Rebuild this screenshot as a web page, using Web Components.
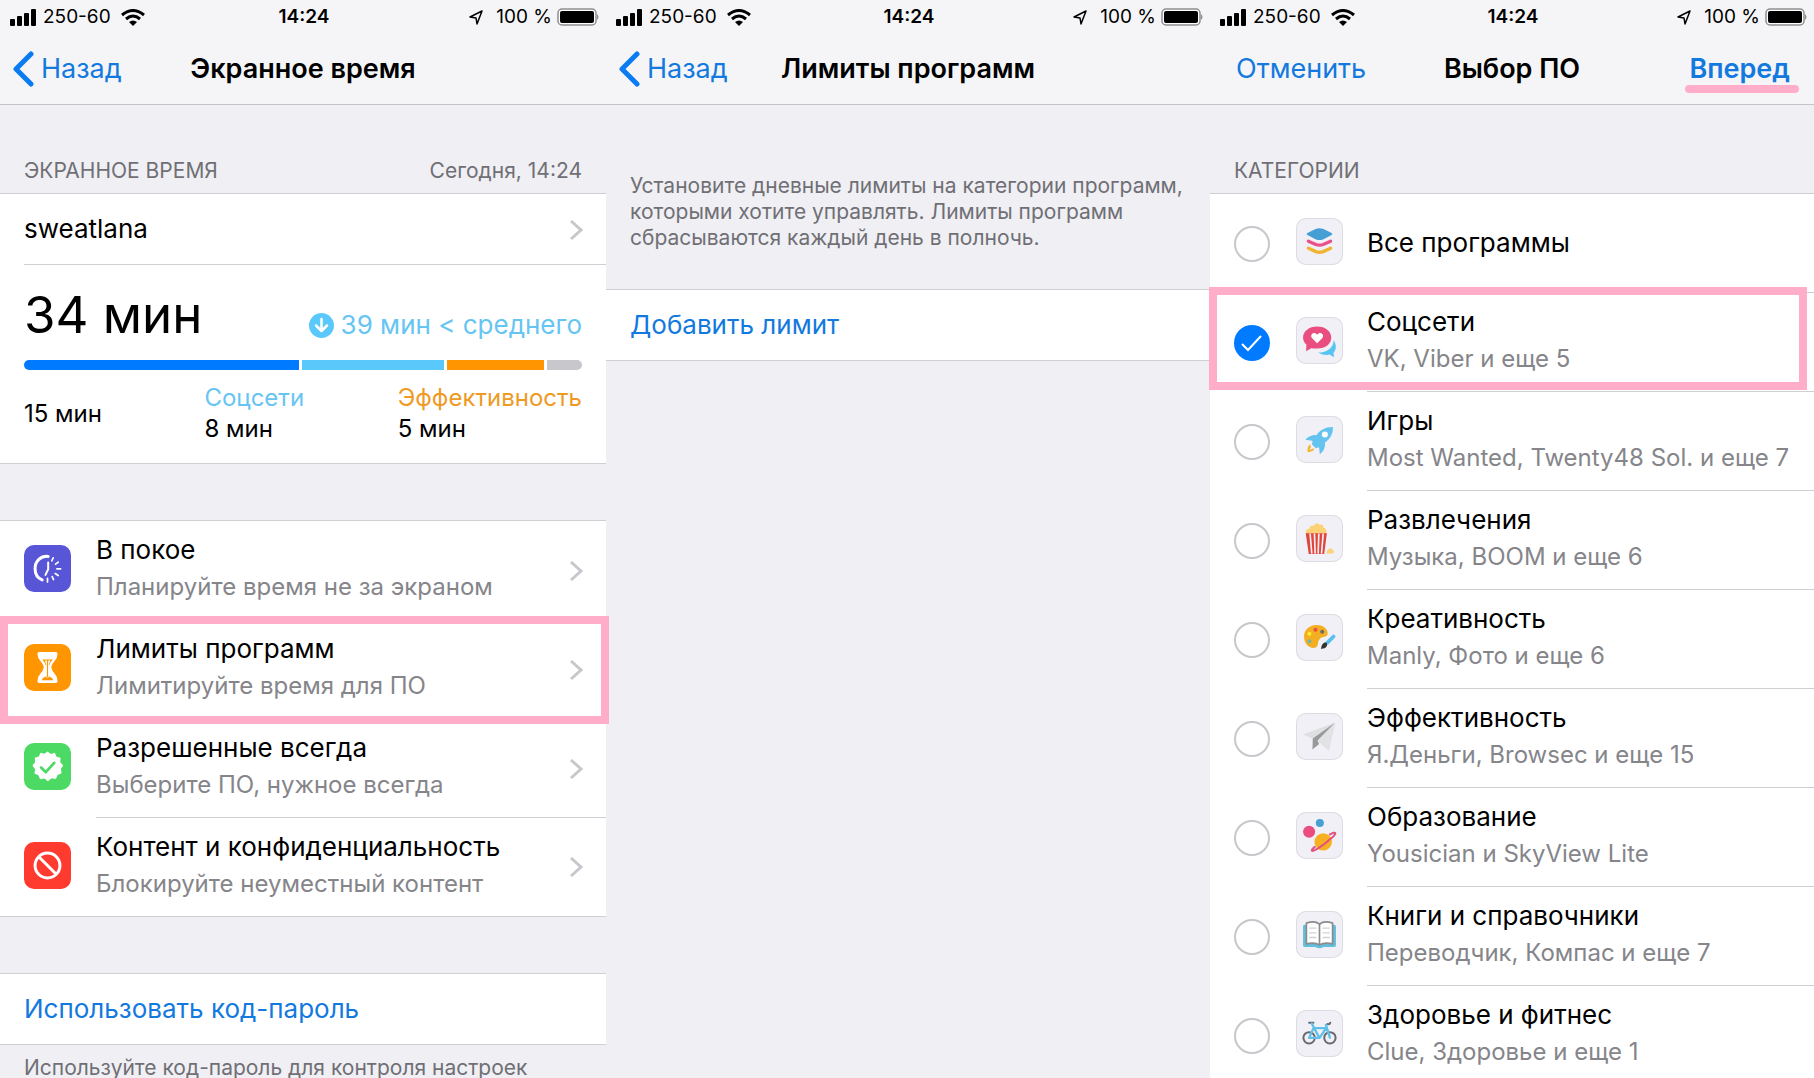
<!DOCTYPE html>
<html lang="ru">
<head>
<meta charset="utf-8">
<meta name="viewport" content="width=device-width, initial-scale=1">
<title>Экранное время</title>
<style>
  :root {
    --bg: #efeff4;
    --bar: #f5f5f7;
    --line: #cfced3;
    --blue: #1279df;
    --grey: #85858a;
    --caption: #6f6f75;
    --mark: #ffadc9;
    --gutter: 24px;
  }
  body {
    margin: 0;
    height: 100vh;
    display: grid;
    grid-template-columns: 303fr 302fr 302fr;
    overflow: hidden;
    background: var(--bg);
    color: #000;
    font-family: Inter, "Liberation Sans", sans-serif;
  }
</style>
</head>
<body>

<phone-screen>
  <nav-bar slot="bar" heading="Экранное время" back="Назад"></nav-bar>
  <section-head>ЭКРАННОЕ ВРЕМЯ<span slot="end">Сегодня, 14:24</span></section-head>
  <list-group>
    <link-row chevron>sweatlana</link-row>
    <usage-summary></usage-summary>
  </list-group>
  <list-group spaced>
    <link-row chevron icon="rest" note="Планируйте время не за экраном">В покое</link-row>
    <link-row chevron marked icon="limits" note="Лимитируйте время для ПО">Лимиты программ</link-row>
    <link-row chevron icon="allowed" note="Выберите ПО, нужное всегда">Разрешенные всегда</link-row>
    <link-row chevron icon="content" note="Блокируйте неуместный контент">Контент и конфиденциальность</link-row>
  </list-group>
  <list-group spaced>
    <link-row action>Использовать код-пароль</link-row>
  </list-group>
  <hint-text>Используйте код-пароль для контроля настроек</hint-text>
</phone-screen>

<phone-screen>
  <nav-bar slot="bar" heading="Лимиты программ" back="Назад"></nav-bar>
  <hint-text intro>Установите дневные лимиты на категории программ, которыми хотите управлять. Лимиты программ сбрасываются каждый день в полночь.</hint-text>
  <list-group>
    <link-row action>Добавить лимит</link-row>
  </list-group>
</phone-screen>

<phone-screen>
  <nav-bar slot="bar" heading="Выбор ПО" cancel="Отменить" next="Вперед"></nav-bar>
  <section-head>КАТЕГОРИИ</section-head>
  <list-group>
    <category-row icon="all">Все программы</category-row>
    <category-row icon="social" checked marked note="VK, Viber и еще 5">Соцсети</category-row>
    <category-row icon="games" note="Most Wanted, Twenty48 Sol. и еще 7">Игры</category-row>
    <category-row icon="fun" note="Музыка, BOOM и еще 6">Развлечения</category-row>
    <category-row icon="creative" note="Manly, Фото и еще 6">Креативность</category-row>
    <category-row icon="work" note="Я.Деньги, Browsec и еще 15">Эффективность</category-row>
    <category-row icon="study" note="Yousician и SkyView Lite">Образование</category-row>
    <category-row icon="books" note="Переводчик, Компас и еще 7">Книги и справочники</category-row>
    <category-row icon="health" note="Clue, Здоровье и еще 1">Здоровье и фитнес</category-row>
  </list-group>
</phone-screen>

<script>
const ICONS = {
  rest: `<g fill="none" stroke="#fff" stroke-linecap="round">
    <path stroke-width="9" d="M72 34C50 32 33 48 33 70c0 16 8 29 21 34"/>
    <path stroke-width="6" d="M72 52v20l-8 17"/>
    <path stroke-width="5" d="M87 38l-4 9M102 51l-8 6M98 71h11M93 85l9 6M84 94l4 9M70 99v11"/></g>`,
  limits: `<path fill="#fff" d="M45 24h50q5 0 5 5 0 12-9 22-8 9-10 18 2 10 10 19 9 10 9 22 0 6-5 6H45q-5 0-5-6 0-12 9-22 8-9 10-19-2-9-10-18-9-10-9-22 0-5 5-5z"/>
    <path fill="#ff9500" d="M54 46h32q-9 9-11 18H65q-2-9-11-18zM52 108q3-8 13-11l3-3V66h4v28l3 3q10 3 13 11z"/>
    <path stroke="#fff" stroke-width="5" d="M65 49l4 13v38M76 49l-5 13v38" fill="none"/><path stroke="#ff9500" stroke-width="3" d="M70 51v47"/>`,
  allowed: `<path fill="#fff" d="M70 25l10 8 12-4 5 12 12 3-1 13 9 10-7 10 2 13-12 5-5 12-13-2-11 9-10-8-13 2-5-12-12-5 2-13-8-11 8-10-1-13 12-4 5-11 12 3z"/>
    <path fill="none" stroke="#4cd964" stroke-width="8" stroke-linecap="round" stroke-linejoin="round" d="M51 73l14 14 25-28"/>`,
  content: `<g fill="none" stroke="#fff" stroke-width="9"><circle cx="70" cy="70" r="37"/><path d="M44 44l52 52"/></g>`,
  all: `<path fill="#459fd5" d="M34 51q-5-3 0-6l24-12q12-5 24 0l24 12q5 3 0 6L82 63q-12 5-24 0z"/>
    <g fill="none" stroke-width="10" stroke-linecap="round"><path stroke="#e9518a" d="M37 69l22 10q11 4 22 0l22-10"/><path stroke="#f0b530" d="M37 90l22 10q11 4 22 0l22-10"/></g>`,
  social: `<path fill="#5ac4f0" d="M112 69c10 14 8 29 0 37l1 14-13-8c-12 3-25 0-34-6 26 0 46-14 46-37z"/>
    <path fill="#ea4e81" d="M63 28c24 0 42 14 42 33S88 94 63 94c-6 0-12 0-16-2L30 102l1-20c-6-5-10-12-10-21 0-19 18-33 42-33z"/>
    <path fill="#fff" d="M63 78L48 63c-9-11 7-23 15-10 8-13 24-1 15 10z"/>`,
  games: `<path fill="#64c4ef" d="M110 33c-20-1-38 8-49 24-12-1-24 3-33 14l20 3c2 3 1 6-1 10l12 12c4-2 8-3 10-1l2 19c12-8 17-21 15-34 15-11 25-26 24-47z"/>
    <circle cx="86" cy="55" r="9" fill="#fff"/><path fill="#f5b32d" d="M43 85c-7 2-10 12-8 23 10-1 19-5 20-12l-7 2-8 3 4-7z"/>`,
  fun: `<path fill="#fdd276" d="M31 57c-5-8 1-16 9-16 0-8 8-11 13-8 1-8 12-11 17-4 7-3 13 2 12 9 8 1 11 10 7 19z"/>
    <path fill="#dd453f" d="M29 54h63l-8 62H38z"/><path stroke="#f9eeee" stroke-width="5" d="M42 55l5 60M55 55l2 60M68 55l-2 60M81 55l-5 60"/>
    <path fill="#fdd276" d="M93 115c-4-4-1-10 3-9-1-9 12-9 12-1 6-1 7 8 2 10z"/>`,
  creative: `<path fill="#f3ae22" d="M60 33c22-1 37 14 34 28-2 8-14 5-22 12-10 9-3 18-11 25-11 9-37-2-37-31 0-20 16-33 36-34z"/>
    <circle cx="58" cy="47" r="6" fill="#e8504a"/><circle cx="78" cy="53" r="6" fill="#6f6a66"/><circle cx="40" cy="59" r="6" fill="#fdec29"/><circle cx="40" cy="81" r="6" fill="#7bb69c"/>
    <path stroke="#5bbfee" stroke-width="11" stroke-linecap="round" d="M112 67L93 86"/><path fill="#333" d="M91 86c4 6 2 18-17 18 2-3 1-9 5-14 3-4 8-6 12-4z"/>`,
  work: `<path fill="#dedfe0" d="M117 28L22 64l28 13z"/><path fill="#e1e2e3" d="M117 28L64 82l34 31z"/><path fill="#98999b" d="M117 28L50 76l-1 33 20-17-5-10z"/>`,
  study: `<circle cx="71" cy="33" r="12" fill="#489fd2"/><circle cx="39" cy="59" r="18" fill="#ea4e81"/><circle cx="81" cy="89" r="26" fill="#f7b021"/>
    <path fill="none" stroke="#e2527d" stroke-width="6" stroke-linecap="round" stroke-linejoin="round" d="M101 67q14-8 16-4 1 4-14 17-16 15-35 27-20 12-21 8 0-4 9-11"/>`,
  books: `<rect x="21" y="41" width="98" height="66" rx="5" fill="#62bedd"/><path fill="#62bedd" d="M59 104h22v4q-11 6-22 0z"/>
    <path fill="#fff" stroke="#8b8b8d" stroke-width="5" stroke-linejoin="round" d="M31 36q25-8 39 3 14-11 39-3v62q-25-6-39 3-14-9-39-3z"/><path stroke="#8b8b8d" stroke-width="5" d="M70 39v61"/>
    <path stroke="#d2d2d4" stroke-width="4" d="M39 51h22M39 65h22M39 79h22M79 51h22M79 65h22M79 79h22"/>`,
  health: `<g fill="none" stroke-linecap="round" stroke-linejoin="round"><g stroke="#6a6a6c" stroke-width="6"><circle cx="39" cy="83" r="17"/><circle cx="101" cy="83" r="17"/><path d="M39 38h13M94 42q7 1 8-4"/></g>
    <path stroke="#5fc0ea" stroke-width="7" d="M39 83l13-29h38L70 83H39M47 40l22 42M89 44l12 38"/></g>`
};

const TILES = { rest: "#5856d6", limits: "#ff9500", allowed: "#4cd964", content: "#ff3b30" };

// Base element: opens a shadow root and fills it from render().
class View extends HTMLElement {
  connectedCallback() {
    if (this.shadowRoot) return;
    this.attachShadow({ mode: "open" }).innerHTML = this.render();
  }
  attr(name) {
    return this.getAttribute(name) || "";
  }
}

class PhoneScreen extends View {
  render() {
    return `<style>
      :host { display: flex; flex-direction: column; min-width: 0; height: 100vh; overflow-x: visible; overflow-y: clip; background: var(--bg); }
      header { flex: none; background: var(--bar); border-bottom: 1px solid #c3c3c8; }
      main { display: flex; flex-direction: column; }
    </style>
    <header><status-bar></status-bar><slot name="bar"></slot></header>
    <main><slot></slot></main>`;
  }
}

class StatusBar extends View {
  render() {
    return `<style>
      :host { display: grid; grid-template-columns: 1fr auto 1fr; align-items: center; height: 34px; padding: 0 7px 0 9px; font-size: 19px; line-height: 24px; }
      div { display: flex; align-items: center; }
      .right { justify-content: flex-end; }
      .signal { margin-right: 6px; }
      .wifi { margin-left: 10px; }
      .place { margin-right: 12px; }
      .battery { margin-left: 5px; }
      svg { flex: none; }
      b { font-weight: 600; }
    </style>
    <div>
      <svg class="signal" width="28" height="17" viewBox="0 0 28 17"><rect x="1" y="10" width="5" height="7" rx="1"/><rect x="8" y="7" width="5" height="10" rx="1"/><rect x="15" y="4" width="5" height="13" rx="1"/><rect x="22" y="0" width="5" height="17" rx="1"/></svg>
      <span>250-60</span>
      <svg class="wifi" width="24" height="17" viewBox="0 0 24 17"><g fill="none" stroke="#000" stroke-width="3"><path d="M1 6Q12-3 23 6"/><path d="M5 10q7-6 14 0"/></g><path d="M8 13q4-3 8 0l-4 4z"/></svg>
    </div>
    <b>14:24</b>
    <div class="right">
      <svg class="place" width="16" height="16" viewBox="0 0 16 16"><path d="M14 2L2 8l6 1 1 6z" fill="none" stroke="#000" stroke-width="1.5" stroke-linejoin="round"/></svg>
      <span>100 %</span>
      <svg class="battery" width="42" height="18" viewBox="0 0 42 18"><rect x="1" y="1" width="38" height="16" rx="4" fill="#fff" stroke="#8e8e92" stroke-width="1.5"/><rect x="3" y="3" width="34" height="12" rx="2"/><path d="M40 6q3 3 0 6z" fill="#8e8e92"/></svg>
    </div>`;
  }
}

class NavBar extends View {
  render() {
    const back = this.attr("back");
    const cancel = this.attr("cancel");
    const next = this.attr("next");
    return `<style>
      :host { display: grid; grid-template-columns: 1fr auto 1fr; align-items: center; height: 70px; padding: 0 var(--gutter); font-size: 27px; line-height: 36px; }
      h1 { margin: 0; font-size: inherit; font-weight: 600; }
      button { position: relative; display: flex; align-items: center; gap: 7px; padding: 0; border: 0; background: none; color: var(--blue); font: inherit; cursor: pointer; }
      .back { margin-left: -12px; }
      .cancel { margin-left: 2px; }
      .next { justify-self: end; font-weight: 600; }
      .next::after { content: ""; position: absolute; top: 34px; left: -4px; right: -9px; height: 8px; border-radius: 4px; background: var(--mark); }
    </style>
    ${back ? `<button class="back"><svg width="22" height="36" viewBox="0 0 22 36" aria-hidden="true"><path d="M19 3L4 18l15 15" fill="none" stroke="#0a7bf3" stroke-width="5" stroke-linecap="round" stroke-linejoin="round"/></svg>${back}</button>` : ""}
    ${cancel ? `<button class="cancel">${cancel}</button>` : ""}
    <h1>${this.attr("heading")}</h1>
    ${next ? `<button class="next">${next}</button>` : ""}`;
  }
}

class SectionHead extends View {
  render() {
    return `<style>
      :host { display: flex; justify-content: space-between; align-items: flex-end; box-sizing: border-box; height: 88px; padding: 0 var(--gutter) 9px; color: var(--caption); font-size: 21px; line-height: 26px; }
    </style><span><slot></slot></span><slot name="end"></slot>`;
  }
}

class HintText extends View {
  render() {
    return `<style>
      :host { display: block; padding: 10px var(--gutter); color: var(--caption); font-size: 21px; line-height: 26px; }
      :host([intro]) { padding: 68px var(--gutter) 38px; }
      p { margin: 0; }
    </style><p><slot></slot></p>`;
  }
}

class ListGroup extends View {
  render() {
    return `<style>
      :host { display: flex; flex-direction: column; background: #fff; border: solid var(--line); border-width: 1px 0; }
      :host([spaced]) { margin-top: 56px; }
    </style><slot></slot>`;
  }
}

class AppIcon extends View {
  render() {
    const name = this.attr("name");
    const tile = TILES[name];
    return `<style>
      :host { display: block; flex: none; box-sizing: border-box; width: 47px; height: 47px; overflow: hidden; border-radius: 10px; background: ${tile || "#f0f0f6"}; }
      :host { ${tile ? "" : "box-shadow: inset 0 0 0 1px #dcdce2;"} }
      svg { display: block; width: 100%; height: 100%; }
    </style><svg viewBox="0 0 140 140" aria-hidden="true">${ICONS[name]}</svg>`;
  }
}

// Shared by both kinds of rows: text block, hairline and the pink frame.
const ROW_CSS = `
  :host { display: block; position: relative; }
  .text { display: flex; flex: 1; flex-direction: column; justify-content: center; box-sizing: border-box; min-width: 0; border-bottom: 1px solid var(--line); white-space: nowrap; }
  .title { font-size: 26px; line-height: 36px; }
  .note { color: var(--grey); font-size: 24px; line-height: 38px; }
  .tall .text { min-height: 99px; padding-bottom: 3px; }
  .tall .text.single { padding-bottom: 0; }
  app-icon { margin-bottom: 4px; }
  :host([marked])::after { content: ""; position: absolute; inset: var(--frame); border: 8px solid var(--mark); pointer-events: none; }
`;

class LinkRow extends View {
  render() {
    const icon = this.attr("icon");
    const note = this.attr("note");
    return `<style>
      .text { min-height: 71px; padding-right: 60px; }
      ${ROW_CSS}
      :host { --frame: -4px -3px -5px 0; }
      a { display: flex; align-items: center; gap: 25px; padding-left: var(--gutter); color: inherit; text-decoration: none; }
      :host(:last-child) .text { min-height: 70px; border-bottom: 0; }
      :host(:last-child) .tall .text { min-height: 98px; }
      :host([action]) a { color: var(--blue); }
      .chevron { position: absolute; right: 22px; }
    </style>
    <a href="#" class="${icon ? "tall" : ""}">
      ${icon ? `<app-icon name="${icon}"></app-icon>` : ""}
      <span class="text"><span class="title"><slot></slot></span>${note ? `<span class="note">${note}</span>` : ""}</span>
      ${this.hasAttribute("chevron") ? `<svg class="chevron" width="16" height="24" viewBox="0 0 16 24" aria-hidden="true"><path d="M3 3l10 9-10 9" fill="none" stroke="#c7c7cc" stroke-width="3"/></svg>` : ""}
    </a>`;
  }
}

class CategoryRow extends View {
  render() {
    const note = this.attr("note");
    return `<style>${ROW_CSS}
      :host { --frame: -6px 7px 2px -1px; }
      label { display: flex; align-items: center; padding-left: var(--gutter); cursor: pointer; }
      input { flex: none; appearance: none; box-sizing: border-box; width: 36px; height: 36px; margin: 0 26px 0 0; border: 2px solid #c7c7cc; border-radius: 50%; }
      input:checked { border: 0; background: #007aff url('data:image/svg+xml,<svg xmlns="http://www.w3.org/2000/svg" viewBox="0 0 36 36"><path d="M8 19l6 6 13-14" fill="none" stroke="white" stroke-width="2"/></svg>'); }
      app-icon { margin-right: 24px; }
    </style>
    <label class="tall">
      <input type="checkbox" ${this.hasAttribute("checked") ? "checked" : ""}>
      <app-icon name="${this.attr("icon")}"></app-icon>
      <span class="text ${note ? "" : "single"}"><span class="title"><slot></slot></span>${note ? `<span class="note">${note}</span>` : ""}</span>
    </label>`;
  }
}

class UsageSummary extends View {
  render() {
    return `<style>
      :host { display: block; padding: 18px var(--gutter) 19px; }
      .top { display: flex; justify-content: space-between; align-items: flex-end; }
      .total { font-size: 51px; line-height: 64px; }
      .delta { display: flex; align-items: center; gap: 7px; color: #66c5f2; font-size: 26px; line-height: 44px; }
      .bar { display: flex; gap: 3px; height: 10px; margin: 13px 0 12px; overflow: hidden; border-radius: 5px; }
      .bar i { flex: 1 1 0; }
      .legend { display: grid; grid-template-columns: 181fr 194fr auto; align-items: center; font-size: 24px; line-height: 31px; }
      .legend div { display: flex; flex-direction: column; }
      .social { color: #66c5f2; }
      .work { color: #ee9a25; }
    </style>
    <div class="top">
      <span class="total">34 мин</span>
      <span class="delta"><svg width="25" height="25" viewBox="0 0 25 25" aria-hidden="true"><circle cx="12.5" cy="12.5" r="12.5" fill="#5ac8fa"/><path d="M12.5 6v12M7 12.5l5.500 5.500 5.500-5.500" fill="none" stroke="#fff" stroke-width="2.500" stroke-linecap="round" stroke-linejoin="round"/></svg>39 мин &lt; среднего</span>
    </div>
    <div class="bar">
      <i style="flex-grow: 275; background: #007aff"></i>
      <i style="flex-grow: 142; background: #5ac8fa"></i>
      <i style="flex-grow: 97; background: #ff9500"></i>
      <i style="flex-grow: 35; background: #c7c7cc"></i>
    </div>
    <div class="legend">
      <div>15 мин</div>
      <div><span class="social">Соцсети</span><span>8 мин</span></div>
      <div><span class="work">Эффективность</span><span>5 мин</span></div>
    </div>`;
  }
}

customElements.define("app-icon", AppIcon);
customElements.define("status-bar", StatusBar);
customElements.define("nav-bar", NavBar);
customElements.define("section-head", SectionHead);
customElements.define("hint-text", HintText);
customElements.define("list-group", ListGroup);
customElements.define("link-row", LinkRow);
customElements.define("category-row", CategoryRow);
customElements.define("usage-summary", UsageSummary);
customElements.define("phone-screen", PhoneScreen);
</script>
</body>
</html>
